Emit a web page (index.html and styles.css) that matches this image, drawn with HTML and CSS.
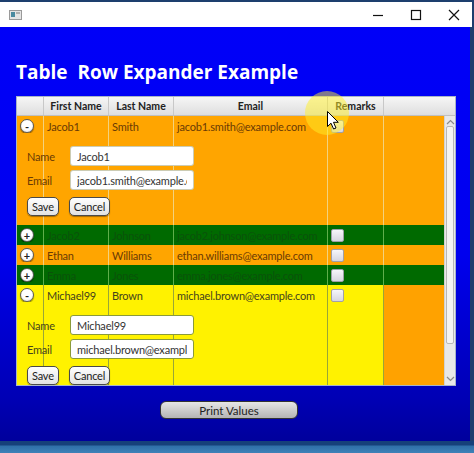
FILE: index.html
```html
<!DOCTYPE html>
<html lang="en">
<head>
    <meta charset="UTF-8">
    <title>Table Row Expander Example</title>
    <link rel="stylesheet" href="styles.css">
</head>
<body>
    <div class="window">
        <!-- 标题栏 -->
        <div class="titlebar">
            <svg class="app-icon" width="13" height="10" viewBox="0 0 13 10">
                <rect x="0.5" y="0.5" width="12" height="9" fill="#e4e4e4" stroke="#9a9a9a"/>
                <rect x="2" y="2" width="4" height="5" fill="#4a8aa0"/>
                <rect x="7" y="2" width="4" height="2" fill="#b0b0b0"/>
            </svg>
            <div class="controls">
                <svg width="12" height="12" viewBox="0 0 12 12"><path d="M1 6.5h10" stroke="#111" stroke-width="1.2"/></svg>
                <svg width="12" height="12" viewBox="0 0 12 12"><rect x="1.5" y="1.5" width="9" height="9" fill="none" stroke="#111" stroke-width="1.2"/></svg>
                <svg width="12" height="12" viewBox="0 0 12 12"><path d="M1 1L11 11M11 1L1 11" stroke="#111" stroke-width="1.2"/></svg>
            </div>
        </div>

        <div class="content">
            <h1 class="heading">Table  Row Expander Example</h1>

            <div class="table">
                <!-- 表头 -->
                <div class="thead">
                    <div class="th"></div>
                    <div class="th">First Name</div>
                    <div class="th">Last Name</div>
                    <div class="th">Email</div>
                    <div class="th">Remarks</div>
                    <div class="th"></div>
                </div>

                <div class="tbody">
                    <div class="rows">
                        <!-- 展开的行 -->
                        <div class="row orange">
                            <div class="cells">
                                <div class="cell"><span class="toggle">-</span></div>
                                <div class="cell">Jacob1</div>
                                <div class="cell">Smith</div>
                                <div class="cell">jacob1.smith@example.com</div>
                                <div class="cell"><span class="check"></span></div>
                                <div class="cell"></div>
                            </div>
                            <div class="expand">
                                <div class="field"><label>Name</label><input type="text" value="Jacob1"></div>
                                <div class="field"><label>Email</label><input type="text" value="jacob1.smith@example.com"></div>
                                <div class="buttons">
                                    <button class="btn">Save</button>
                                    <button class="btn">Cancel</button>
                                </div>
                            </div>
                        </div>

                        <div class="row green">
                            <div class="cells">
                                <div class="cell"><span class="toggle">+</span></div>
                                <div class="cell">Jacob2</div>
                                <div class="cell">Johnson</div>
                                <div class="cell">jacob2.johnson@example.com</div>
                                <div class="cell"><span class="check"></span></div>
                                <div class="cell"></div>
                            </div>
                        </div>

                        <div class="row orange">
                            <div class="cells">
                                <div class="cell"><span class="toggle">+</span></div>
                                <div class="cell">Ethan</div>
                                <div class="cell">Williams</div>
                                <div class="cell">ethan.williams@example.com</div>
                                <div class="cell"><span class="check"></span></div>
                                <div class="cell"></div>
                            </div>
                        </div>

                        <div class="row green">
                            <div class="cells">
                                <div class="cell"><span class="toggle">+</span></div>
                                <div class="cell">Emma</div>
                                <div class="cell">Jones</div>
                                <div class="cell">emma.jones@example.com</div>
                                <div class="cell"><span class="check"></span></div>
                                <div class="cell"></div>
                            </div>
                        </div>

                        <div class="row yellow">
                            <div class="cells">
                                <div class="cell"><span class="toggle">-</span></div>
                                <div class="cell">Michael99</div>
                                <div class="cell">Brown</div>
                                <div class="cell">michael.brown@example.com</div>
                                <div class="cell"><span class="check"></span></div>
                                <div class="cell"></div>
                            </div>
                            <div class="expand">
                                <div class="field"><label>Name</label><input type="text" value="Michael99"></div>
                                <div class="field"><label>Email</label><input type="text" value="michael.brown@example.com"></div>
                                <div class="buttons">
                                    <button class="btn">Save</button>
                                    <button class="btn">Cancel</button>
                                </div>
                            </div>
                        </div>
                    </div>

                    <!-- 滚动条 -->
                    <div class="scrollbar">
                        <svg class="arrow" width="9" height="6" viewBox="0 0 9 6"><path d="M1 5L4.5 1.5L8 5" fill="none" stroke="#8a8a8a" stroke-width="1.2"/></svg>
                        <div class="thumb"></div>
                        <svg class="arrow" width="9" height="6" viewBox="0 0 9 6"><path d="M1 1L4.5 4.5L8 1" fill="none" stroke="#8a8a8a" stroke-width="1.2"/></svg>
                    </div>
                </div>
            </div>

            <div class="actions">
                <button class="print">Print Values</button>
            </div>

            <!-- 鼠标高亮 -->
            <div class="spot"></div>
            <svg class="pointer" width="12" height="19" viewBox="0 0 12 19">
                <path d="M0.5 0.5V15.5L4 12.2L6.6 18L9 17L6.5 11.3H11.3Z" fill="#fff" stroke="#000" stroke-width="1"/>
            </svg>
        </div>

        <div class="taskbar"></div>
    </div>
</body>
</html>
```

FILE: styles.css
```css
*{
    margin: 0;
    padding: 0;
    box-sizing: border-box;
}
body{
    width: 474px;
    height: 453px;
    overflow: hidden;
    font-family: Lato, "Liberation Sans", sans-serif;
}
.window{
    width: 474px;
    height: 453px;
    background: #1d3f6e;
    padding-top: 2px;
    display: flex;
    flex-direction: column;
}
/* 标题栏 */
.titlebar{
    height: 25px;
    background: #fff;
    display: flex;
    align-items: center;
    padding-left: 9px;
    margin-right: 2px;
}
.controls{
    margin-left: auto;
    display: flex;
    gap: 26px;
    padding-right: 12px;
}
.content{
    position: relative;
    height: 414px;
    margin-right: 4px;
    padding-left: 16px;
    overflow: hidden;
    background: linear-gradient(#0000f8, #0000ee 55%, #0000b4 90%, #00009c);
}
.heading{
    color: #fff;
    font-family: "Open Sans", sans-serif;
    font-size: 19px;
    font-weight: 700;
    line-height: 26px;
    white-space: pre;
    margin-top: 32px;
    margin-bottom: 11px;
}
/* 表格 */
.table{
    width: 440px;
    border: 1px solid #a8b4c8;
    background: #ffa500;
}
.thead{
    display: grid;
    grid-template-columns: 27px 65px 65px 154px 56px 1fr;
    height: 19px;
    background: linear-gradient(#f6f6f6, #dedede);
    border-bottom: 1px solid #c0c0c0;
}
.th{
    border-right: 1px solid #c8c8c8;
    font-size: 10.5px;
    font-weight: 700;
    color: #222;
    text-align: center;
    line-height: 18px;
}
.th:last-child{
    border-right: none;
}
.tbody{
    display: flex;
    height: 269px;
    overflow: hidden;
}
.rows{
    width: 427px;
}
.row{
    --line: #f3d27e;
    color: #6a3a05;
    background-color: #ffa500;
    background-image:
        linear-gradient(var(--line), var(--line)),
        linear-gradient(var(--line), var(--line)),
        linear-gradient(var(--line), var(--line)),
        linear-gradient(var(--line), var(--line)),
        linear-gradient(var(--line), var(--line));
    background-size: 1px 100%;
    background-position: 26px 0, 91px 0, 156px 0, 310px 0, 366px 0;
    background-repeat: no-repeat;
}
.row.green{
    --line: #5fae4a;
    color: #0a520a;
    background-color: #006a00;
}
.row.yellow{
    --line: #98a638;
    color: #45441c;
    background-image:
        linear-gradient(var(--line), var(--line)),
        linear-gradient(var(--line), var(--line)),
        linear-gradient(var(--line), var(--line)),
        linear-gradient(var(--line), var(--line)),
        linear-gradient(var(--line), var(--line)),
        linear-gradient(to right, #fff200 367px, #ffa200 367px);
    background-size: 1px 100%, 1px 100%, 1px 100%, 1px 100%, 1px 100%, 100% 100%;
    background-position: 26px 0, 91px 0, 156px 0, 310px 0, 366px 0, 0 0;
}
.cells{
    display: grid;
    grid-template-columns: 27px 65px 65px 154px 56px 60px;
    height: 20px;
    align-items: center;
    font-size: 11px;
    letter-spacing: -0.2px;
}
.cell{
    padding-left: 3px;
    white-space: nowrap;
    overflow: hidden;
}
.toggle{
    display: flex;
    align-items: center;
    justify-content: center;
    width: 14px;
    height: 14px;
    border-radius: 50%;
    border: 1px solid #5a5a5a;
    background: radial-gradient(circle at 50% 40%, #fff 50%, #dcdcdc);
    box-shadow: 0 1px 1px rgba(0, 0, 0, 0.5);
    color: #222;
    font-size: 11px;
    font-weight: 700;
    line-height: 1;
    letter-spacing: 0;
}
.check{
    display: block;
    width: 13px;
    height: 13px;
    border: 1px solid #a0a0a8;
    border-radius: 2px;
    background: linear-gradient(#f6f6fa, #d6d6e0);
}
/* 展开区域 */
.expand{
    padding: 10px 0 9px 10px;
}
.field{
    display: flex;
    align-items: center;
    height: 20px;
    margin-bottom: 4px;
}
.field label{
    width: 43px;
    font-size: 11px;
    letter-spacing: -0.2px;
}
.field input{
    width: 124px;
    height: 20px;
    border: 1px solid rgba(110, 110, 40, 0.35);
    border-radius: 3px;
    padding: 0 6px;
    font-family: inherit;
    font-size: 11px;
    letter-spacing: -0.2px;
    color: #333;
    background: #fff;
    outline: none;
}
.yellow .field input{
    border-color: #8a9a3a;
}
.buttons{
    display: flex;
    gap: 10px;
    margin-top: 7px;
}
.btn{
    height: 19px;
    padding: 0 4px;
    border: 1px solid #4a4a4a;
    border-radius: 5px;
    background: linear-gradient(#fff, #e2e2e2);
    box-shadow: 0 1px 1px rgba(0, 0, 0, 0.35);
    font-family: inherit;
    font-size: 11px;
    letter-spacing: -0.2px;
    color: #222;
}
/* 滚动条 */
.scrollbar{
    width: 11px;
    background: #e8e8e8;
    border-left: 1px solid #d2d2d2;
    display: flex;
    flex-direction: column;
    align-items: center;
    padding: 3px 0 3px;
}
.thumb{
    width: 8px;
    height: 218px;
    margin-top: 1px;
    border: 1px solid #b8b8b8;
    border-radius: 2px;
    background: #f4f4f4;
}
.scrollbar .arrow:last-child{
    margin-top: auto;
}
/* 底部按钮 */
.actions{
    display: flex;
    padding: 15px 0 0 144px;
}
.print{
    width: 138px;
    height: 18px;
    border: 1px solid #333;
    border-radius: 6px;
    background: linear-gradient(#e6e6e6, #b4b4b4);
    font-family: inherit;
    font-size: 11.5px;
    color: #222;
}
/* 鼠标 */
.spot{
    position: absolute;
    left: 305px;
    top: 64px;
    width: 44px;
    height: 44px;
    border-radius: 50%;
    background: rgba(255, 240, 40, 0.5);
}
.pointer{
    position: absolute;
    left: 327px;
    top: 84px;
}
.taskbar{
    height: 12px;
    background: linear-gradient(#16407a 0, #16407a 4px, #2f6fa8 5px, #3f82b8);
}
```
